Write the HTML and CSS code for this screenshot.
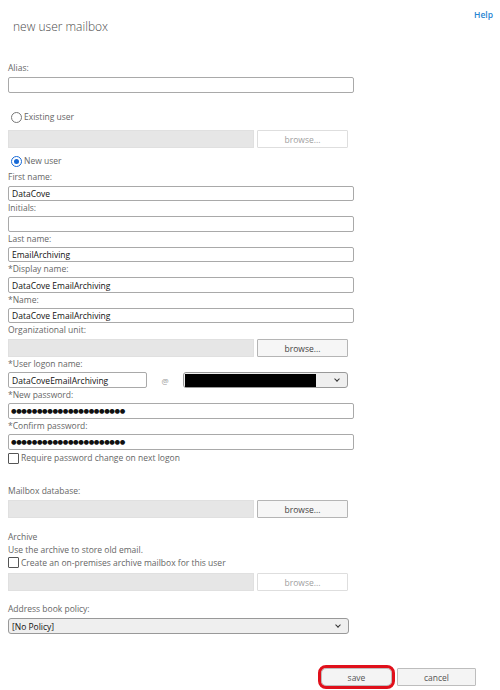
FILE: index.html
```html
<!DOCTYPE html>
<html lang="en">
<head>
<meta charset="utf-8">
<title>new user mailbox</title>
<link rel="stylesheet" href="styles.css">
</head>
<body>
<div class="page">
  <div class="top">
    <h1 class="title">new user mailbox</h1>
    <a class="help" href="#">Help</a>
  </div>

  <form class="form">
    <label class="lbl">Alias:</label>
    <input class="inp alias" type="text" value="">

    <div class="radio-row r-existing"><span class="radio"></span><span class="opt">Existing user</span></div>
    <div class="browse-row r-existing-browse">
      <div class="disabled-box"></div>
      <button type="button" class="btn-browse off">browse...</button>
    </div>

    <div class="radio-row r-new"><span class="radio on"></span><span class="opt">New user</span></div>

    <label class="lbl first">First name:</label>
    <input class="inp f" type="text" value="DataCove">
    <label class="lbl">Initials:</label>
    <input class="inp f tall" type="text" value="">
    <label class="lbl">Last name:</label>
    <input class="inp f" type="text" value="EmailArchiving">
    <label class="lbl">*Display name:</label>
    <input class="inp f tall" type="text" value="DataCove EmailArchiving">
    <label class="lbl">*Name:</label>
    <input class="inp f" type="text" value="DataCove EmailArchiving">
    <label class="lbl">Organizational unit:</label>
    <div class="browse-row r-org">
      <div class="disabled-box"></div>
      <button type="button" class="btn-browse">browse...</button>
    </div>
    <label class="lbl">*User logon name:</label>
    <div class="logon-row">
      <input class="inp logon" type="text" value="DataCoveEmailArchiving">
      <span class="at">@</span>
      <div class="sel domain"><span class="redact"></span><span class="chev"></span></div>
    </div>
    <label class="lbl">*New password:</label>
    <input class="inp f pw" type="text" value="●●●●●●●●●●●●●●●●●●●●●●">
    <label class="lbl">*Confirm password:</label>
    <input class="inp f pw" type="text" value="●●●●●●●●●●●●●●●●●●●●●●">
    <div class="check-row r-require"><span class="check"></span><span class="opt">Require password change on next logon</span></div>

    <label class="lbl mbx">Mailbox database:</label>
    <div class="browse-row r-mbx">
      <div class="disabled-box"></div>
      <button type="button" class="btn-browse">browse...</button>
    </div>

    <div class="lbl archive">Archive</div>
    <div class="lbl note">Use the archive to store old email.</div>
    <div class="check-row r-archive"><span class="check"></span><span class="opt">Create an on-premises archive mailbox for this user</span></div>
    <div class="browse-row r-archive-browse">
      <div class="disabled-box"></div>
      <button type="button" class="btn-browse off">browse...</button>
    </div>

    <label class="lbl abp">Address book policy:</label>
    <div class="sel policy"><span class="sel-text">[No Policy]</span><span class="chev"></span></div>
  </form>

  <div class="actions">
    <button type="button" class="btn save">save</button>
    <button type="button" class="btn">cancel</button>
  </div>
</div>
</body>
</html>
```

FILE: styles.css
```css
* { box-sizing: border-box; }
html, body { margin: 0; background: #fff; }
body {
  font-family: "Open Sans", "Noto Sans", sans-serif;
  font-size: 8.5px;
  color: #555;
}
.page { width: 500px; height: 690px; padding: 0 8px; overflow: hidden; }

.top { display: flex; justify-content: space-between; align-items: flex-start; padding-top: 8px; }
.title {
  margin: 0;
  padding: 11px 0 0 5px;
  font-size: 12px;
  line-height: 16px;
  font-weight: 300;
  color: #4a4a4a;
}
.help {
  font-size: 8.5px;
  line-height: 14px;
  color: #2784d2;
  text-decoration: none;
  margin-right: -1px;
  font-weight: 600;
}

.form { display: flex; flex-direction: column; width: 346px; margin-top: 26px; }
.lbl { display: block; line-height: 14px; color: #666; }

.inp {
  display: block;
  width: 346px;
  height: 15px;
  margin: 1px 0 0;
  padding: 0 3px;
  border: 1px solid #a9a9a9;
  border-radius: 2px;
  background: #fff;
  font-family: "Open Sans", "Noto Sans", sans-serif;
  font-size: 8.5px;
  color: #111;
  outline: none;
}
.inp.tall { height: 16px; }
.inp.alias { margin-top: 2px; height: 16px; }
.lbl.first { margin-top: 2px; }
.lbl.first + .inp { margin-top: 2px; }
.inp.pw {
  height: 16px;
  font-family: "DejaVu Sans", sans-serif;
  font-size: 6.4px;
  letter-spacing: -0.4px;
  padding-left: 2px;
}

.radio-row, .check-row { display: flex; align-items: center; gap: 2px; line-height: 14px; }
.r-existing { margin-top: 17px; height: 14px; }
.r-new { margin-top: 6px; height: 14px; }
.radio {
  width: 11px; height: 11px; margin-left: 3px;
  border: 1px solid #777; border-radius: 50%;
  display: inline-flex; align-items: center; justify-content: center;
  background: #fff;
}
.radio.on { border: 1.5px solid #1769d6; }
.radio.on::after { content: ""; width: 5px; height: 5px; border-radius: 50%; background: #1769d6; }
.opt { color: #666; }

.browse-row { display: flex; gap: 3px; height: 18px; }
.r-existing-browse { margin-top: 6px; }
.r-org { margin-top: 2px; }
.r-mbx { margin-top: 2px; }
.r-archive-browse { margin-top: 4px; }
.disabled-box { width: 246px; height: 18px; background: #e6e6e6; border: 1px solid #e0e0e0; }
.btn-browse {
  width: 91px; height: 18px; padding: 0;
  border: 1px solid #b5b5b5; border-radius: 1px;
  background: #f6f6f6;
  font-family: "Open Sans", "Noto Sans", sans-serif;
  font-size: 8.5px; color: #444;
}
.btn-browse.off { background: #fff; border-color: #dedede; color: #a0a0a0; }

.logon-row { display: flex; align-items: center; margin-top: 1px; height: 16px; }
.inp.logon { width: 139px; height: 16px; margin: 0; }
.at { width: 36px; text-align: center; color: #999; font-size: 8px; }
.sel {
  position: relative;
  height: 16px;
  border: 1px solid #999;
  border-radius: 3px;
  background: #efefef;
  display: flex; align-items: center;
}
.sel.domain { width: 165px; }
.redact { display: block; width: 131px; height: 13px; margin-left: 1px; background: #000; }
.chev {
  position: absolute; right: 8px; top: 4px;
  width: 4px; height: 4px;
  border-right: 1.3px solid #333; border-bottom: 1.3px solid #333;
  transform: rotate(45deg);
}
.sel.policy { width: 341px; margin-top: 2px; }
.sel-text { padding-left: 3px; color: #111; }

.r-require { height: 16px; gap: 1px; }
.r-archive { height: 13px; gap: 1px; }
.check { width: 11px; height: 11px; border: 1px solid #555; border-radius: 1px; background: #fff; margin-right: 1px; }

.lbl.mbx { margin-top: 18px; }
.lbl.archive { margin-top: 12px; }
.lbl.note { line-height: 12px; }
.lbl.abp { margin-top: 11px; }

.actions { display: flex; justify-content: flex-end; gap: 5px; margin-top: 34px; padding-right: 16px; }
.btn {
  width: 79px; height: 18px; padding: 0;
  border: 1px solid #bdbdbd; border-radius: 1px;
  background: #f4f4f4;
  font-family: "Open Sans", "Noto Sans", sans-serif;
  font-size: 8.5px; color: #555;
}
.btn.save {
  width: 71px;
  outline: 3px solid #e0101b;
  outline-offset: 0px;
  border-radius: 5px;
}
```
